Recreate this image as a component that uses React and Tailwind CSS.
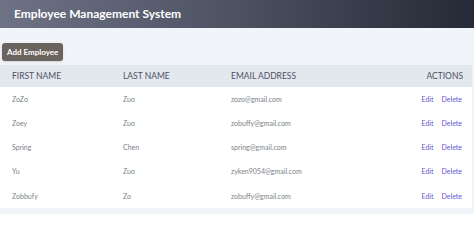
const employees = [
  { first: "ZoZo", last: "Zuo", email: "zozo@gmail.com" },
  { first: "Zoey", last: "Zuo", email: "zobuffy@gmail.com" },
  { first: "Spring", last: "Chen", email: "spring@gmail.com" },
  { first: "Yu", last: "Zuo", email: "zyken9054@gmail.com" },
  { first: "Zobbufy", last: "Zo", email: "zobuffy@gmail.com" },
]

export default function App() {
  return (
    <div className="min-h-[214px] w-[474px] overflow-hidden bg-[#f1f4f9] font-['Lato',sans-serif]">
      <header className="flex h-[28px] items-center bg-gradient-to-r from-[#6d7385] via-[#4d5263] to-[#252a36] px-[14px]">
        <h1 className="text-[12px] font-bold leading-none text-white">Employee Management System</h1>
      </header>

      <div className="flex pt-[15px]">
        <button className="ml-[2px] h-[18px] rounded-[3px] bg-[#6b635e] px-[5px] text-[8px] font-bold leading-none text-white shadow-sm">
          Add Employee
        </button>
      </div>

      <table className="mt-[4px] w-[472px] border-collapse bg-white text-left">
        <thead>
          <tr className="h-[22px] bg-[#e3e7ee] text-[8.5px] uppercase text-[#4b5263]">
            <th className="w-[123px] pl-[12px] font-normal">First Name</th>
            <th className="w-[108px] font-normal">Last Name</th>
            <th className="font-normal">Email Address</th>
            <th className="pr-[9px] text-right font-normal">Actions</th>
          </tr>
        </thead>
        <tbody>
          {employees.map((e, i) => (
            <tr key={i} className="h-[24.2px] text-[7px] text-[#7a7f88]">
              <td className="pl-[12px]">{e.first}</td>
              <td>{e.last}</td>
              <td>{e.email}</td>
              <td className="pr-[10px] text-right text-[#6658d3]">
                <span className="mr-[8px]">Edit</span>
                <span>Delete</span>
              </td>
            </tr>
          ))}
        </tbody>
      </table>
    </div>
  )
}
